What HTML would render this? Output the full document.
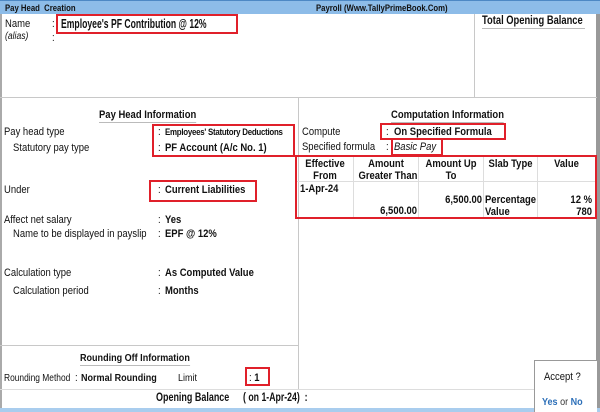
<!DOCTYPE html>
<html><head><meta charset="utf-8"><style>
*{margin:0;padding:0;box-sizing:border-box}
body{width:600px;height:412px;position:relative;background:#fff;font-family:"Liberation Sans",Arial,sans-serif;font-size:11px;color:#111;overflow:hidden}
.a{position:absolute;white-space:nowrap;line-height:12px;transform:scaleX(.86);transform-origin:0 0}
.c{transform-origin:50% 0}
.rt{transform-origin:100% 0}
.b{font-weight:bold}
.r{position:absolute;border:2px solid #e0202a}
.l{position:absolute;background:#c8c8c8}
.u{border-bottom:1px solid #bbb;padding-bottom:1px}
</style></head><body>
<div style="position:absolute;left:0;top:0;width:600px;height:14px;background:#8dbce8;border-top:1px solid #4d88c4"></div>
<div class="a b" style="left:5px;top:2px;font-size:9px">Pay Head&nbsp; Creation</div>
<div class="a b" style="left:316px;top:2px;font-size:9px">Payroll (Www.TallyPrimeBook.Com)</div>
<div class="l" style="left:0;top:14px;width:2px;height:398px;background:#aaa"></div>
<div class="l" style="left:596px;top:14px;width:4px;height:398px;background:#999"></div>
<div class="l" style="left:474px;top:14px;width:1px;height:84px"></div>
<div class="l" style="left:0;top:97px;width:597px;height:1px"></div>
<div class="l" style="left:298px;top:98px;width:1px;height:291px"></div>
<div class="l" style="left:0;top:345px;width:298px;height:1px"></div>
<div class="l" style="left:0;top:389px;width:534px;height:1px;background:#ddd"></div>
<div style="position:absolute;left:0;top:408px;width:600px;height:4px;background:#a9cdee"></div>

<div class="a" style="left:5px;top:18px;font-size:11px">Name</div>
<div class="a" style="left:52px;top:18px">:</div>
<div class="a" style="left:5px;top:31px;font-style:italic;font-size:10px">(alias)</div>
<div class="a" style="left:52px;top:32px">:</div>
<div class="r" style="left:56px;top:14px;width:182px;height:20px"></div>
<div class="a b" style="left:61px;top:17px;font-size:12.5px;line-height:14px;transform:scaleX(.69)">Employee's PF Contribution @ 12%</div>
<div class="a b u" style="left:482px;top:14px;font-size:12px;line-height:13px;padding-right:3px;transform:scaleX(.78)">Total Opening Balance</div>

<div class="a b u" style="left:99px;top:109px">Pay Head Information</div>
<div class="a" style="left:4px;top:126px">Pay head type</div>
<div class="a" style="left:13px;top:142px">Statutory pay type</div>
<div class="a" style="left:4px;top:184px">Under</div>
<div class="a" style="left:4px;top:214px">Affect net salary</div>
<div class="a" style="left:13px;top:228px">Name to be displayed in payslip</div>
<div class="a" style="left:4px;top:267px">Calculation type</div>
<div class="a" style="left:13px;top:285px">Calculation period</div>
<div class="a" style="left:158px;top:126px">:</div>
<div class="a b" style="left:165px;top:126px;font-size:9.2px;letter-spacing:-0.3px">Employees' Statutory Deductions</div>
<div class="a" style="left:158px;top:142px">:</div><div class="a b" style="left:165px;top:142px">PF Account (A/c No. 1)</div>
<div class="a" style="left:158px;top:184px">:</div><div class="a b" style="left:165px;top:184px">Current Liabilities</div>
<div class="a" style="left:158px;top:214px">:</div><div class="a b" style="left:165px;top:214px">Yes</div>
<div class="a" style="left:158px;top:228px">:</div><div class="a b" style="left:165px;top:228px">EPF @ 12%</div>
<div class="a" style="left:158px;top:267px">:</div><div class="a b" style="left:165px;top:267px">As Computed Value</div>
<div class="a" style="left:158px;top:285px">:</div><div class="a b" style="left:165px;top:285px">Months</div>
<div class="r" style="left:152px;top:124px;width:143px;height:33px"></div>
<div class="r" style="left:149px;top:180px;width:108px;height:22px"></div>

<div class="a b u" style="left:391px;top:109px">Computation Information</div>
<div class="a" style="left:302px;top:126px">Compute</div>
<div class="a" style="left:302px;top:141px">Specified formula</div>
<div class="a" style="left:386px;top:126px">:</div><div class="a b" style="left:394px;top:126px">On Specified Formula</div>
<div class="a" style="left:386px;top:141px">:</div><div class="a" style="left:394px;top:141px;font-style:italic">Basic Pay</div>
<div class="r" style="left:380px;top:123px;width:126px;height:17px"></div>
<div class="r" style="left:391px;top:139px;width:52px;height:17px;border-top:none"></div>
<div class="r" style="left:295px;top:155px;width:302px;height:64px"></div>
<div class="l" style="left:353px;top:157px;width:1px;height:60px;background:#ddd"></div>
<div class="l" style="left:418px;top:157px;width:1px;height:60px;background:#ddd"></div>
<div class="l" style="left:483px;top:157px;width:1px;height:60px;background:#ddd"></div>
<div class="l" style="left:537px;top:157px;width:1px;height:60px;background:#ddd"></div>
<div class="l" style="left:297px;top:181px;width:298px;height:1px;background:#ddd"></div>
<div class="a b c" style="left:297px;top:158px;width:56px;text-align:center">Effective<br>From</div>
<div class="a b c" style="left:354px;top:158px;width:64px;text-align:center">Amount<br>Greater Than</div>
<div class="a b c" style="left:419px;top:158px;width:64px;text-align:center">Amount Up<br>To</div>
<div class="a b c" style="left:484px;top:158px;width:53px;text-align:center">Slab Type</div>
<div class="a b c" style="left:538px;top:158px;width:57px;text-align:center">Value</div>
<div class="a b" style="left:300px;top:183px">1-Apr-24</div>
<div class="a b rt" style="left:419px;top:194px;width:63px;text-align:right">6,500.00</div>
<div class="a b rt" style="left:354px;top:205px;width:63px;text-align:right">6,500.00</div>
<div class="a b" style="left:485px;top:194px">Percentage<br>Value</div>
<div class="a b rt" style="left:538px;top:194px;width:54px;text-align:right">12 %<br>780</div>

<div class="a b u" style="left:80px;top:352px;font-size:10.5px">Rounding Off Information</div>
<div class="a" style="left:4px;top:372px;font-size:10.5px;transform:scaleX(.8)">Rounding Method</div>
<div class="a" style="left:75px;top:372px">:</div>
<div class="a b" style="left:81px;top:372px;font-size:10.5px">Normal Rounding</div>
<div class="a" style="left:178px;top:372px;font-size:10.5px">Limit</div>
<div class="r" style="left:245px;top:367px;width:25px;height:19px"></div>
<div class="a b" style="left:249px;top:372px"><span style="font-weight:normal">:</span> 1</div>
<div class="a b" style="left:156px;top:392px;font-size:11.5px;transform:scaleX(.78)">Opening Balance</div>
<div class="a b" style="left:243px;top:392px;font-size:11.5px;transform:scaleX(.76)">( on 1-Apr-24)&nbsp; :</div>

<div style="position:absolute;left:534px;top:360px;width:63px;height:52px;border:1px solid #999;border-right:none;border-bottom:none;background:#fff"></div>
<div class="a" style="left:544px;top:371px;font-size:11px">Accept ?</div>
<div class="a b" style="left:542px;top:396px;color:#2c6fb8;font-size:10.5px">Yes <span style="color:#333;font-weight:normal">or</span> No</div>
</body></html>
